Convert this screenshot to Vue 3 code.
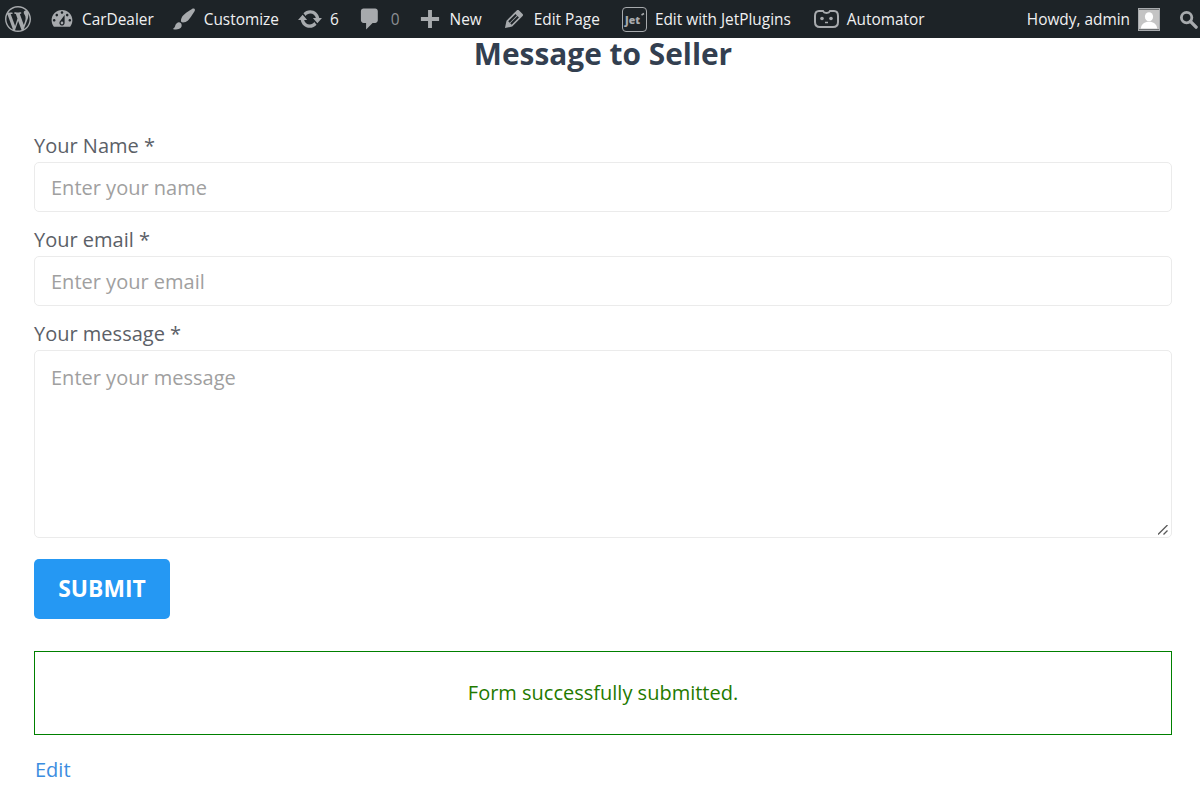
<script setup>
const menu = [
  { label: 'CarDealer', cls: '', path: 'M3.76 16h12.48c1.1-1.37 1.76-3.11 1.76-5 0-4.42-3.58-8-8-8s-8 3.58-8 8c0 1.89.66 3.63 1.76 5zM10 4c.55 0 1 .45 1 1s-.45 1-1 1-1-.45-1-1 .45-1 1-1zM6 6c.55 0 1 .45 1 1s-.45 1-1 1-1-.45-1-1 .45-1 1-1zm8 0c.55 0 1 .45 1 1s-.45 1-1 1-1-.45-1-1 .45-1 1-1zm-5.37 5.55L12 7v6c0 1.1-.9 2-2 2s-2-.9-2-2c0-.57.24-1.08.63-1.45zM4 10c.55 0 1 .45 1 1s-.45 1-1 1-1-.45-1-1 .45-1 1-1zm12 0c.55 0 1 .45 1 1s-.45 1-1 1-1-.45-1-1 .45-1 1-1zm-5 3c0-.55-.45-1-1-1s-1 .45-1 1 .45 1 1 1 1-.45 1-1z' },
  { label: 'Customize', cls: 'tight', path: 'M18.33 3.57s.27-.8-.31-1.36c-.53-.52-1.22-.24-1.22-.24-.61.3-5.76 3.47-7.67 5.57-.86.96-2.06 3.79-1.09 4.82.92.98 3.96-.17 4.79-1 2.06-2.06 5.21-7.17 5.5-7.79zM1.4 17.65c2.37-1.56 1.46-3.41 3.23-4.64.93-.65 2.22-.62 3.08.29.63.67.8 2.57-.16 3.46-1.57 1.45-4 1.55-6.15.89z' },
  { label: '6', cls: '', path: 'M10.2 3.28c3.53 0 6.43 2.61 6.92 6h2.08l-3.5 4-3.5-4h2.32c-.45-1.97-2.21-3.44-4.32-3.44-1.45 0-2.73.71-3.54 1.78L4.95 5.66C6.23 4.2 8.11 3.28 10.2 3.28zm-.4 13.44c-3.52 0-6.43-2.61-6.92-6H.8l3.5-4c1.17 1.33 2.33 2.67 3.5 4H5.48c.45 1.97 2.21 3.44 4.32 3.44 1.45 0 2.73-.71 3.54-1.78l1.71 1.95c-1.28 1.46-3.15 2.39-5.25 2.39z' },
  { label: '0', cls: 'dim', path: 'M5 2h9c1.1 0 2 .9 2 2v7c0 1.1-.9 2-2 2h-2l-5 5v-5H5c-1.1 0-2-.9-2-2V4c0-1.1.9-2 2-2z' },
  { label: 'New', cls: 'tight', path: 'M17 8.500v3h-5.500V17h-3v-5.500H3v-3h5.500V3h3v5.500H17z' },
  { label: 'Edit Page', cls: 'loose', path: 'M13.89 3.39l2.71 2.72c.46.46.42 1.24.03 1.64l-8.01 8.02-5.56 1.16 1.16-5.58s7.6-7.63 7.99-8.03c.39-.39 1.22-.39 1.68.07zm-2.73 2.79l-5.59 5.61 1.11 1.11 5.54-5.65zm-2.97 8.23l5.58-5.6-1.07-1.08-5.59 5.6z' }
]
</script>

<template>
  <div class="page">
    <header class="bar">
      <nav class="bar-left">
        <a class="logo">
          <svg class="ico" viewBox="0 0 20 20"><path d="M20 10c0-5.51-4.49-10-10-10C4.48 0 0 4.49 0 10c0 5.52 4.48 10 10 10 5.51 0 10-4.48 10-10zM7.78 15.37L4.37 6.22c.55-.02 1.17-.08 1.17-.08.5-.06.44-1.13-.06-1.11 0 0-1.45.11-2.37.11-.18 0-.37 0-.58-.01C4.12 2.69 6.87 1.11 10 1.11c2.33 0 4.45.87 6.05 2.34-.68-.11-1.65.39-1.65 1.58 0 .74.45 1.36.9 2.1.35.61.55 1.36.55 2.46 0 1.49-1.4 5-1.4 5l-3.03-8.37c.54-.02.82-.17.82-.17.5-.05.44-1.25-.06-1.22 0 0-1.44.12-2.38.12-.87 0-2.33-.12-2.33-.12-.5-.03-.56 1.2-.06 1.22l.92.08 1.26 3.41zM17.41 10c.24-.64.74-1.87.43-4.25.7 1.29 1.05 2.71 1.05 4.25 0 3.29-1.73 6.24-4.4 7.78.97-2.59 1.94-5.2 2.92-7.78zM6.1 18.09C3.12 16.65 1.11 13.53 1.11 10c0-1.3.23-2.48.72-3.59C3.25 10.3 4.67 14.2 6.1 18.09zm4.03-6.63l2.58 6.98c-.86.29-1.76.45-2.71.45-.79 0-1.57-.11-2.29-.33.81-2.38 1.62-4.74 2.42-7.1z" /></svg>
        </a>
        <a v-for="m in menu" :key="m.label" class="item" :class="m.cls">
          <svg class="ico" viewBox="0 0 20 20"><path :d="m.path" /></svg>
          <span>{{ m.label }}</span>
        </a>
        <a class="item jet-item">
          <svg class="jet" viewBox="0 0 25 25">
            <rect x=".5" y=".5" width="24" height="24" rx="3.500" fill="none" stroke="#a7aaad" />
            <text x="3" y="17" class="jet-text">Jet</text>
            <path d="M19.500 8l2.500-1.500" stroke="#a7aaad" stroke-width="1.500" />
          </svg>
          <span>Edit with JetPlugins</span>
        </a>
        <a class="item auto-item">
          <svg class="auto" viewBox="0 0 25 18">
            <path d="M5 1h4c1 2.500 6 2.500 7 0h4c3 0 4 2 4 5v6c0 3-2 5-5 5H6c-3 0-5-2-5-5V6c0-3 1-5 4-5z" fill="none" stroke="#a7aaad" stroke-width="2" />
            <circle cx="8" cy="8.500" r="1.800" fill="#a7aaad" />
            <circle cx="17" cy="8.500" r="1.800" fill="#a7aaad" />
            <path d="M11 12.500h3" stroke="#a7aaad" stroke-width="1.500" />
          </svg>
          <span>Automator</span>
        </a>
      </nav>
      <div class="bar-right">
        <span>Howdy, admin</span>
        <span class="avatar">
          <svg viewBox="0 0 22 22"><rect width="22" height="22" fill="#c4c4c4" /><ellipse cx="11" cy="8" rx="4.500" ry="5" fill="#fff" /><path d="M2 21c.5-5 4-7.500 9-7.500s8.500 2.500 9 7.500z" fill="#fff" /></svg>
        </span>
        <svg class="search" viewBox="0 0 20 20"><circle cx="8" cy="8" r="5.500" fill="none" stroke="#a7aaad" stroke-width="3" /><path d="M12 12l6 6" stroke="#a7aaad" stroke-width="3.600" stroke-linecap="round" /></svg>
      </div>
    </header>

    <main class="content">
      <h2 class="title">Message to Seller</h2>
      <form class="form" @submit.prevent>
        <label class="field">
          <span class="label">Your Name *</span>
          <input class="control" type="text" placeholder="Enter your name" />
        </label>
        <label class="field">
          <span class="label">Your email *</span>
          <input class="control" type="email" placeholder="Enter your email" />
        </label>
        <label class="field">
          <span class="label">Your message *</span>
          <span class="area-wrap">
            <textarea class="control area" placeholder="Enter your message"></textarea>
            <svg class="grip" viewBox="0 0 10 10"><path d="M0 9.500L9.500 0M5.500 9.500L9.500 5.500" stroke="#5a5a5a" stroke-width="1.300" fill="none" /></svg>
          </span>
        </label>
        <button class="submit" type="submit">SUBMIT</button>
      </form>
      <div class="success">Form successfully submitted.</div>
      <a class="edit">Edit</a>
    </main>
  </div>
</template>

<style>
html, body { margin: 0; background: #fff; overflow: hidden; }
</style>

<style scoped>
.page {
  height: 786px;
  overflow: hidden;
  font-family: "Open Sans", sans-serif;
  color: #54595f;
}
.bar {
  height: 38px;
  background: #1d2327;
  color: #f0f0f1;
  font-size: 15.4px;
  display: flex;
  justify-content: space-between;
  align-items: center;
}
.bar-left { display: flex; align-items: center; }
.logo { display: flex; padding: 0 9px 0 5px; }
.ico { width: 26px; height: 26px; fill: #a7aaad; flex: none; }
.item {
  display: flex;
  align-items: center;
  gap: 7px;
  padding: 0 9px;
  white-space: nowrap;
}
.item.tight { margin-left: -1px; }
.item.loose { margin-left: 1px; }
.item.dim { color: #8c8f94; gap: 8px; }
.jet-item { gap: 8px; margin-left: 4px; }
.jet { width: 25px; height: 25px; flex: none; }
.jet-text { font: 800 10.5px "Open Sans", sans-serif; fill: #a7aaad; }
.auto { width: 25px; height: 18px; flex: none; }
.auto-item { gap: 8px; margin-left: 5px; }
.bar-right { display: flex; align-items: center; padding-right: 2px; }
.avatar {
  display: flex;
  box-sizing: border-box;
  width: 22px;
  height: 23px;
  border: 1px solid #a7aaad;
  margin-left: 8px;
}
.avatar svg { width: 100%; height: 100%; }
.search { width: 19px; height: 19px; margin-left: 19px; }

.content { padding: 0 28px 0 34px; }
.title {
  margin: 0;
  font-size: 29.85px;
  line-height: 32px;
  font-weight: 700;
  text-align: center;
  color: #333f50;
}
.form { display: flex; flex-direction: column; margin-top: 60px; }
.field { display: flex; flex-direction: column; margin-bottom: 12px; }
.label { font-size: 20px; line-height: 32px; color: #5b6067; }
.control {
  box-sizing: border-box;
  width: 100%;
  height: 50px;
  padding: 0 16px;
  border: 1px solid #ebebeb;
  border-radius: 5px;
  font: 20px/28px "Open Sans", sans-serif;
  color: #54595f;
  background: #fff;
  outline: none;
}
.control::placeholder { color: #a0a0a0; opacity: 1; }
.area-wrap { position: relative; display: block; height: 188px; }
.area { height: 188px; padding: 13px 16px; display: block; resize: none; }
.grip { position: absolute; right: 4px; bottom: 3px; width: 10px; height: 10px; }
.submit {
  width: 136px;
  height: 60px;
  margin-top: 9px;
  border: none;
  border-radius: 5px;
  background: #2598f3;
  color: #fff;
  font: 700 22.8px "Open Sans", sans-serif;
  padding: 0 0 1px;
}
.success {
  box-sizing: border-box;
  height: 84px;
  margin-top: 32px;
  padding-bottom: 2px;
  border: 1px solid #008000;
  color: #1f7a00;
  font-size: 20px;
  display: flex;
  align-items: center;
  justify-content: center;
}
.edit { display: block; margin: 21px 0 0 1px; font-size: 20px; line-height: 28px; color: #3b8de0; }
</style>
